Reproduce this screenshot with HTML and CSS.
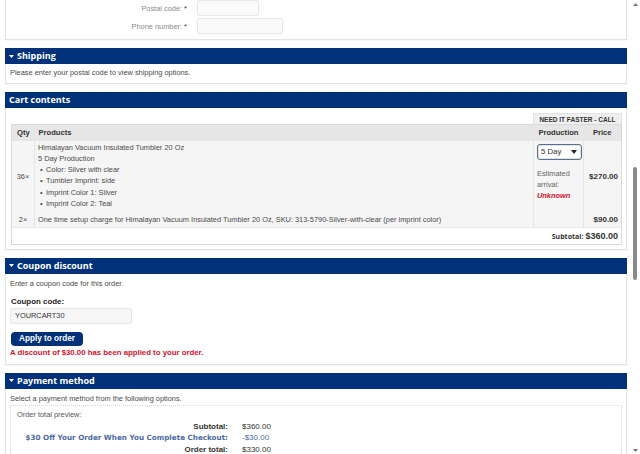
FILE: index.html
```html
<!DOCTYPE html>
<html lang="en">
<head>
<meta charset="utf-8">
<title>Checkout</title>
<link rel="stylesheet" href="styles.css">
</head>
<body>
<div class="page">
  <main class="content">
    <section class="panel panel-top">
      <div class="form-row">
        <label class="form-label">Postal code: <span class="req">*</span></label>
        <span class="input input-postal"></span>
      </div>
      <div class="form-row">
        <label class="form-label">Phone number: <span class="req">*</span></label>
        <span class="input input-phone"></span>
      </div>
    </section>

    <section class="panel">
      <h2 class="panel-title"><svg class="caret" width="5" height="3" viewBox="0 0 5 3"><path d="M0 0h5L2.5 3z" fill="#fff"/></svg>Shipping</h2>
      <div class="panel-body">
        <p class="text">Please enter your postal code to view shipping options.</p>
      </div>
    </section>

    <section class="panel">
      <h2 class="panel-title">Cart contents</h2>
      <div class="panel-body cart-body">
        <table class="cart">
          <colgroup>
            <col class="c-qty"><col><col class="c-prod"><col class="c-price">
          </colgroup>
          <tr class="row-call">
            <td colspan="2" class="call-blank"></td>
            <td colspan="2" class="call">NEED IT FASTER - CALL</td>
          </tr>
          <tr class="row-head">
            <th class="h-qty">Qty</th>
            <th class="h-products">Products</th>
            <th class="h-center">Production</th>
            <th class="h-center">Price</th>
          </tr>
          <tr class="row-item">
            <td class="qty">36×</td>
            <td class="desc">
              <div>Himalayan Vacuum Insulated Tumbler 20 Oz</div>
              <div>5 Day Production</div>
              <ul class="attrs">
                <li>Color: Silver with clear</li>
                <li>Tumbler Imprint: side</li>
                <li>Imprint Color 1: Silver</li>
                <li>Imprint Color 2: Teal</li>
              </ul>
            </td>
            <td class="production">
              <div class="select"><span>5 Day</span><svg width="6" height="4" viewBox="0 0 6 4"><path d="M0 0h6L3 4z" fill="#222"/></svg></div>
              <div class="eta">Estimated<br>arrival:<br><em class="unknown">Unknown</em></div>
            </td>
            <td class="price">$270.00</td>
          </tr>
          <tr class="row-item row-setup">
            <td class="qty">2×</td>
            <td class="desc">One time setup charge for Himalayan Vacuum Insulated Tumbler 20 Oz, SKU: 313-5790-Silver-with-clear (per imprint color)</td>
            <td class="production"></td>
            <td class="price">$90.00</td>
          </tr>
          <tr class="row-subtotal">
            <td colspan="4"><span class="sub-label">Subtotal:</span> <span class="sub-value">$360.00</span></td>
          </tr>
        </table>
      </div>
    </section>

    <section class="panel">
      <h2 class="panel-title"><svg class="caret" width="5" height="3" viewBox="0 0 5 3"><path d="M0 0h5L2.5 3z" fill="#fff"/></svg>Coupon discount</h2>
      <div class="panel-body coupon-body">
        <p class="text">Enter a coupon code for this order.</p>
        <label class="coupon-label">Coupon code:</label>
        <span class="input input-coupon">YOURCART30</span>
        <button class="btn" type="button">Apply to order</button>
        <p class="notice">A discount of $30.00 has been applied to your order.</p>
      </div>
    </section>

    <section class="panel">
      <h2 class="panel-title"><svg class="caret" width="5" height="3" viewBox="0 0 5 3"><path d="M0 0h5L2.5 3z" fill="#fff"/></svg>Payment method</h2>
      <div class="panel-body payment-body">
        <p class="text">Select a payment method from the following options.</p>
        <div class="preview">
          <p class="text preview-title">Order total preview:</p>
          <div class="totals">
            <span class="t-label">Subtotal:</span><span class="t-value">$360.00</span>
            <span class="t-label t-discount">$30 Off Your Order When You Complete Checkout:</span><span class="t-value t-discount-value">-$30.00</span>
            <span class="t-label">Order total:</span><span class="t-value">$330.00</span>
          </div>
        </div>
      </div>
    </section>
  </main>
  <div class="scrollbar">
    <svg class="sb-arrow" width="5" height="3" viewBox="0 0 5 3"><path d="M0 3h5L2.5 0z" fill="#777"/></svg>
    <div class="sb-track"><div class="sb-thumb"></div></div>
    <svg class="sb-arrow" width="5" height="3" viewBox="0 0 5 3"><path d="M0 0h5L2.5 3z" fill="#777"/></svg>
  </div>
</div>
</body>
</html>
```

FILE: styles.css
```css
* { box-sizing: border-box; }
html, body { margin: 0; padding: 0; }
body {
  background: #fff;
  font-family: "Liberation Sans", Arial, sans-serif;
  font-size: 7.4px;
  color: #4a4a4a;
  overflow: hidden;
}
.page {
  display: flex;
  height: 454px;
  overflow: hidden;
}
.content {
  flex: 1;
  display: flex;
  flex-direction: column;
  gap: 8px;
  padding: 0 3px 0 5px;
}
.panel {
  border: 1px solid #e3e3e3;
  border-top: 0;
  background: #fff;
  box-shadow: 0 1px 1px rgba(0,0,0,0.03);
}
.panel-top {
  display: flex;
  flex-direction: column;
  gap: 2px;
  padding: 0 0 5px;
}
.form-row {
  display: flex;
  align-items: center;
  gap: 10px;
  height: 16px;
}
.form-label {
  width: 181px;
  text-align: right;
  color: #8a8a8a;
}
.req { color: #333; }
.input {
  display: block;
  height: 16px;
  background: #fafafa;
  border: 1px solid #e6e6e6;
  border-radius: 2px;
}
.input-postal { width: 62px; }
.input-phone { width: 86px; }

.panel-title {
  margin: 0 -1px;
  height: 16px;
  background: #013279;
  color: #fff;
  font-family: "Open Sans", sans-serif;
  font-weight: 700;
  font-size: 9px;
  line-height: 16px;
  padding-left: 4px;
  display: flex;
  align-items: center;
}
.caret { margin-right: 3px; }
.panel-body { padding: 4px 4px 5px; }
.text { margin: 0; line-height: 10px; }

.cart-body { padding: 5px 4px 4px 5px; }
.cart {
  width: 100%;
  border-collapse: collapse;
  table-layout: fixed;
}
.c-qty { width: 23px; }
.c-prod { width: 50px; }
.c-price { width: 38px; }
.cart td, .cart th { padding: 0; }
.row-call td { height: 11px; }
.call-blank { border: 0; }
.call {
  background: #efefef;
  border: 1px solid #e2e2e2;
  border-bottom: 0;
  text-align: center;
  font-weight: 700;
  font-size: 6.5px;
  color: #333;
}
.row-head th {
  height: 16px;
  background: #e6e6e6;
  font-weight: 700;
  font-size: 7.6px;
  color: #333;
  border-top: 1px solid #dadada;
  text-align: left;
}
.row-head th:first-child { border-left: 1px solid #dadada; }
.row-head th:last-child { border-right: 1px solid #dadada; }
.h-qty { padding-left: 5px !important; }
.h-products { padding-left: 4px !important; }
.cart .h-center { text-align: center; }
.row-item td {
  background: #f5f5f5;
  line-height: 11.3px;
  border-left: 1px solid #e6e6e6;
}
.row-item td:first-child { border-left: 1px solid #dadada; }
.row-item td:last-child { border-right: 1px solid #dadada; }
.qty { text-align: center; vertical-align: middle; }
.desc { padding: 1px 0 3px 3px !important; vertical-align: top; color: #4a4a4a; }
.attrs {
  margin: 0;
  padding: 0 0 0 8px;
  list-style: none;
}
.attrs li::before {
  content: "•";
  display: inline-block;
  width: 6px;
  margin-left: -6px;
}
.production { vertical-align: top; padding: 3px 2px 0 3px !important; }
.select {
  width: 45px;
  height: 16px;
  border: 1px solid #5a6f8a;
  border-radius: 3px;
  background: #fff;
  display: flex;
  align-items: center;
  justify-content: space-between;
  padding: 0 4px 0 3px;
  color: #333;
  font-size: 7.8px;
  box-shadow: inset 0 0 0 1px #dde3ea;
}
.eta { margin-top: 8px; color: #666; }
.unknown { color: #d0112b; font-weight: 700; }
.price {
  text-align: right;
  vertical-align: middle;
  font-weight: 700;
  font-size: 8px;
  color: #333;
  padding-right: 3px !important;
}
.row-setup td { height: 15px; border-top: 0; }
.row-setup .desc { padding: 1px 0 1px 3px !important; vertical-align: middle; }
.row-setup .price { vertical-align: middle; }
.row-subtotal td {
  height: 17px;
  text-align: right;
  padding-right: 3px;
  border: 1px solid #dadada;
  border-top: 1px solid #ececec;
  color: #333;
}
.sub-label { font-family: "Open Sans", sans-serif; font-weight: 700; font-size: 7px; }
.sub-value { font-weight: 700; font-size: 9px; }

.coupon-body { padding: 5px 4px 6px 4px; display: flex; flex-direction: column; align-items: flex-start; }
.coupon-label {
  margin-top: 8px;
  font-weight: 700;
  font-size: 7.9px;
  line-height: 10px;
  color: #222;
  padding-left: 1px;
}
.input-coupon {
  margin-top: 1px;
  width: 122px;
  background: #f6f6f6;
  line-height: 14px;
  padding-left: 4px;
  color: #333;
}
.btn {
  margin: 8px 0 0 1px;
  height: 14px;
  width: 72px;
  padding: 0;
  border: 0;
  border-radius: 4px;
  background: #013279;
  color: #fff;
  font-family: "Liberation Sans", Arial, sans-serif;
  font-weight: 700;
  font-size: 8.2px;
}
.notice {
  margin: 2px 0 0;
  line-height: 10px;
  color: #d0112b;
  font-weight: 700;
  font-size: 7.8px;
}

.payment-body { padding: 5px 4px 0 4px; }
.preview {
  margin-top: 1px;
  border: 1px dotted #d8d8d8;
  padding: 4px 6px 6px;
}
.preview-title { color: #555; }
.totals {
  margin-top: 1px;
  display: grid;
  grid-template-columns: 211px auto;
  column-gap: 14px;
  line-height: 11.5px;
  font-size: 8px;
}
.t-label { text-align: right; font-weight: 700; color: #333; }
.t-value { color: #333; }
.t-discount {
  font-family: "DejaVu Sans", Verdana, sans-serif;
  font-size: 7.2px;
  color: #4c6aa3;
}
.t-discount-value { color: #4c6aa3; }

.scrollbar {
  width: 10px;
  flex: none;
  display: flex;
  flex-direction: column;
  align-items: center;
  padding: 3px 0 2px;
  background: #fff;
}
.sb-arrow { flex: none; }
.sb-track { flex: 1; width: 100%; display: flex; justify-content: center; }
.sb-thumb {
  width: 4px;
  height: 113px;
  margin-top: 161px;
  background: #8a8a8a;
  border-radius: 2px;
}
```
